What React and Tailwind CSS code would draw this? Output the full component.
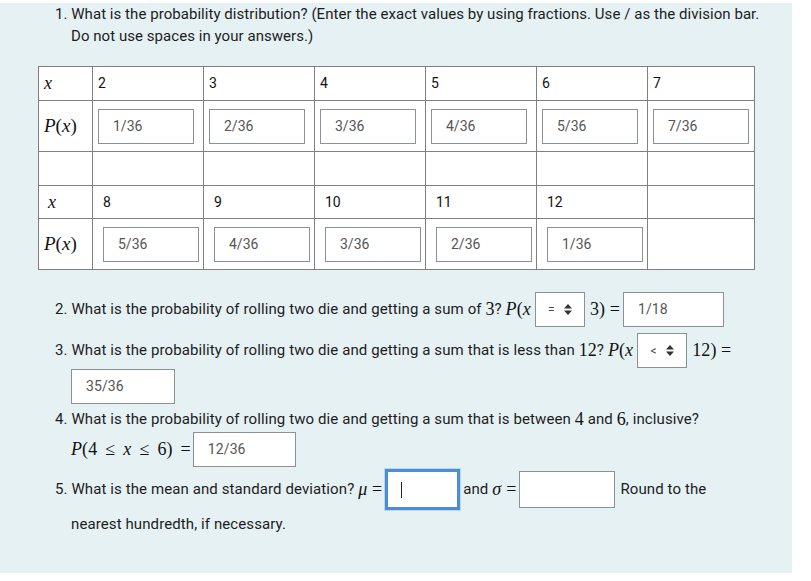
import React from 'react';

const sans = { fontFamily: 'Roboto, "Liberation Sans", sans-serif' };
const serif = 'font-["Liberation_Serif",serif]';

const COLS = [54, 111, 111, 111, 111, 111, 107];
const TOP = [
  { x: '2', p: '1/36' },
  { x: '3', p: '2/36' },
  { x: '4', p: '3/36' },
  { x: '5', p: '4/36' },
  { x: '6', p: '5/36' },
  { x: '7', p: '7/36' },
];
const BOTTOM = [
  { x: '8', p: '5/36' },
  { x: '9', p: '4/36' },
  { x: '10', p: '3/36' },
  { x: '11', p: '2/36' },
  { x: '12', p: '1/36' },
];

function M({ children, italic, size = 'text-[18px]' }) {
  return (
    <span className={`${serif} ${size} text-[#111] whitespace-pre ${italic ? 'italic' : ''}`}>{children}</span>
  );
}

// relation symbol with KaTeX-like thick spacing
function Rel({ children }) {
  return <span className="mx-[8px]">{children}</span>;
}

function Box({ value, w = 'w-[96px]', className = '' }) {
  return (
    <div className={`${w} h-[35px] border border-[#8c9196] bg-white flex items-center pl-[14px] text-[14px] text-[#555] ${className}`}>
      {value}
    </div>
  );
}

function Sorter() {
  return (
    <svg width="8" height="11" viewBox="0 0 8 11" className="fill-[#333]">
      <path d="M4 0 L8 4.5 L0 4.5 Z" />
      <path d="M0 6.5 L8 6.5 L4 11 Z" />
    </svg>
  );
}

function Select({ sym }) {
  return (
    <div className="w-[50px] h-[35px] border border-[#8c9196] bg-white flex items-center justify-center gap-[9px] text-[12px] text-[#444]">
      <span>{sym}</span>
      <Sorter />
    </div>
  );
}

function XCell({ children }) {
  return <td className="border border-[#808080] bg-white px-[5px] text-[14px] text-[#111] align-middle">{children}</td>;
}

export default function App() {
  return (
    <div className="w-[811px] h-[581px] bg-white pt-[3px]" style={sans}>
      <div className="w-[792px] h-[570px] bg-[#e6f1f4]">
        {/* question 1 */}
        <div className="pl-[71px] pr-[20px] text-[15px] leading-[22px] text-[#1d1d1d] tracking-[0.05px]">
          <p className="-indent-[16px]">
            1. What is the probability distribution? (Enter the exact values by using fractions. Use / as the division bar. Do not use spaces in your answers.)
          </p>
        </div>

        <table className="ml-[38px] mt-[19px] border-collapse table-fixed w-[716px]">
          <colgroup>
            {COLS.map((w, i) => (
              <col key={i} style={{ width: w }} />
            ))}
          </colgroup>
          <tbody>
            <tr className="h-[34px]">
              <XCell><M italic>x</M></XCell>
              {TOP.map((c) => (
                <XCell key={c.x}>{c.x}</XCell>
              ))}
            </tr>
            <tr className="h-[51px]">
              <XCell><M size="text-[19px]"><i>P</i>(<i>x</i>)</M></XCell>
              {TOP.map((c) => (
                <td key={c.x} className="border border-[#808080] bg-white px-[5px]">
                  <Box value={c.p} />
                </td>
              ))}
            </tr>
            <tr className="h-[34px]">
              {COLS.map((_, i) => (
                <XCell key={i} />
              ))}
            </tr>
            <tr className="h-[33px]">
              <td className="border border-[#808080] bg-white pl-[9px]"><M italic>x</M></td>
              {BOTTOM.map((c) => (
                <td key={c.x} className="border border-[#808080] bg-white pl-[10px] text-[14px] text-[#111]">{c.x}</td>
              ))}
              <XCell />
            </tr>
            <tr className="h-[51px]">
              <XCell><M size="text-[19px]"><i>P</i>(<i>x</i>)</M></XCell>
              {BOTTOM.map((c) => (
                <td key={c.x} className="border border-[#808080] bg-white pl-[10px]">
                  <Box value={c.p} w="w-[96px]" />
                </td>
              ))}
              <XCell />
            </tr>
          </tbody>
        </table>

        <div className="pl-[71px] text-[15px] tracking-[0.1px] text-[#1d1d1d]">
          {/* question 2 */}
          <div className="mt-[22px] -ml-[16px] flex items-center h-[35px]">
            <span>2. What is the probability of rolling two die and getting a sum of&nbsp;</span>
            <M>3</M>
            <span>?&nbsp;</span>
            <M><i>P</i>(<i>x</i></M>
            <div className="ml-[4px]"><Select sym="=" /></div>
            <span className="ml-[5px]"><M>3) =</M></span>
            <Box value="1/18" w="w-[101px]" className="ml-[3px]" />
          </div>

          {/* question 3 */}
          <div className="mt-[6px] -ml-[16px] flex items-center h-[35px]">
            <span>3. What is the probability of rolling two die and getting a sum that is less than&nbsp;</span>
            <M>12</M>
            <span>?&nbsp;</span>
            <M><i>P</i>(<i>x</i></M>
            <div className="ml-[4px]"><Select sym="<" /></div>
            <span className="ml-[5px]"><M>12) =</M></span>
          </div>
          <Box value="35/36" w="w-[104px]" className="mt-[1px]" />

          {/* question 4 */}
          <div className="mt-[4px] -ml-[16px] flex items-center h-[22px]">
            <span>4. What is the probability of rolling two die and getting a sum that is between&nbsp;</span>
            <M>4</M>
            <span>&nbsp;and&nbsp;</span>
            <M>6</M>
            <span>, inclusive?</span>
          </div>
          <div className="mt-[2px] flex items-center h-[35px]">
            <M><i>P</i>(4<Rel>≤</Rel><i>x</i><Rel>≤</Rel>6)<span className="ml-[8px]">=</span></M>
            <Box value="12/36" w="w-[103px]" className="ml-[2px]" />
          </div>

          {/* question 5 */}
          <div className="mt-[2px] -ml-[16px] flex items-center h-[41px]">
            <span>5. What is the mean and standard deviation?&nbsp;</span>
            <M><i>μ</i> =</M>
            <div className="ml-[3px] w-[75px] h-[41px] border-[3px] border-[#4a8fd6] bg-white flex items-center pl-[13px] shadow-[0_0_0_1px_#bcd6ef]">
              <div className="w-px h-[16px] bg-[#222]" />
            </div>
            <span className="ml-[3px]">and&nbsp;</span>
            <M><i>σ</i><span className="ml-[5px]">=</span></M>
            <Box value="" w="w-[96px]" className="ml-[3px] h-[37px]" />
            <span className="ml-[5px]">Round to the</span>
          </div>
          <p className="mt-[3px]">nearest hundredth, if necessary.</p>
        </div>
      </div>
    </div>
  );
}
